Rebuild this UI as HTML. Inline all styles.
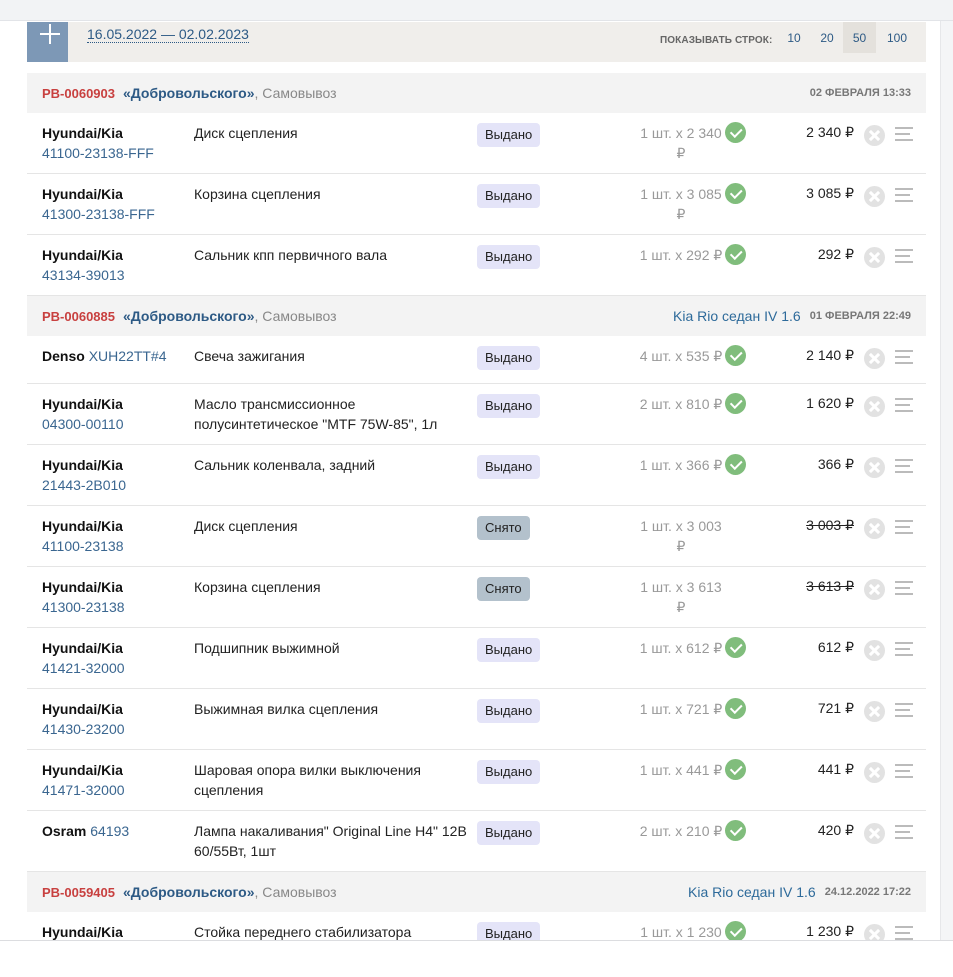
<!DOCTYPE html>
<html><head><meta charset="utf-8"><style>
*{margin:0;padding:0;box-sizing:border-box}
body{width:953px;height:977px;overflow:hidden;background:#fff;font-family:"Liberation Sans",Arial,sans-serif;font-size:14px;color:#222;position:relative}
.topbar{position:absolute;left:0;top:0;width:953px;height:21px;background:#f2f3f5;border-bottom:1px solid #e2e4e8}
.rside{position:absolute;left:940px;top:21px;width:13px;height:920px;background:#f4f5f7;border-left:1px solid #e6e7ea}
.bottom{position:absolute;left:0;top:940px;width:953px;height:37px;background:#fff;border-top:1px solid #dcdde0;z-index:5}
.filter{position:absolute;left:27px;top:22px;width:899px;height:40px;background:#f0eeeb}
.plus{position:absolute;left:0;top:0;width:41px;height:40px;background:#7d98b6}
.plus:before{content:"";position:absolute;left:13px;top:11px;width:20px;height:2px;background:#fff}
.plus:after{content:"";position:absolute;left:22px;top:2px;width:2px;height:20px;background:#fff}
.date{position:absolute;left:60px;top:4px;color:#2d5a85;font-size:14px;border-bottom:1px dotted #2d5a85;line-height:16px}
.show{position:absolute;left:633px;top:13px;font-size:10px;color:#666;font-weight:bold;letter-spacing:.1px}
.pg{position:absolute;top:0;height:31px;line-height:33px;font-size:12px;color:#2d5a85;text-align:center}
.hdr{position:absolute;left:27px;width:899px;height:40px;background:#f3f3f3}
.hdr .num{position:absolute;left:15px;top:13px;color:#c8403f;font-weight:bold;font-size:13px}
.hdr .st{position:absolute;left:96px;top:12px;color:#888;font-size:14px}
.hdr .st b{color:#2d5a85}
.hdr .dt{position:absolute;right:15px;top:14px;font-size:11px;font-weight:bold;color:#777}
.hdr .car{position:absolute;top:12px;color:#2d6a9a;font-size:14px}
.row{position:absolute;left:27px;width:899px;border-bottom:1px solid #e5e5e5}
.br{position:absolute;left:15px;top:10px;line-height:20px;width:150px}
.br b{color:#111}
.br span{color:#3a6690}
.ds{position:absolute;left:167px;top:10px;width:285px;line-height:20px;color:#222}
.bd{position:absolute;left:450px;top:10px;height:24px;line-height:24px;padding:0 8px;border-radius:4px;background:#e4e4f8;font-size:13px;color:#222}
.bd.sn{background:#b3c1cc}
.qt{position:absolute;left:609px;top:10px;width:90px;text-align:center;color:#999;line-height:20px}
.ok{position:absolute;left:698px;top:9px;width:21px;height:21px;border-radius:50%;background:#80bd7c}
.ok:after{content:"";position:absolute;left:5px;top:4px;width:9px;height:5px;border-left:2.5px solid #fff;border-bottom:2.5px solid #fff;transform:rotate(-45deg) translate(-1px,2px)}
.pr{position:absolute;right:72px;top:9px;line-height:20px;color:#222;white-space:nowrap}
.pr.s{text-decoration:line-through}
.x{position:absolute;left:837px;top:12px;width:21px;height:21px;border-radius:50%;background:#e2e2e2}
.x:before,.x:after{content:"";position:absolute;left:4px;top:9px;width:13px;height:3px;background:#fff;transform:rotate(45deg)}
.x:after{transform:rotate(-45deg)}
.m{position:absolute;left:868px;top:14px;width:18px;height:14px}
.m i{position:absolute;left:0;height:2px;background:#bbb;width:18px}
</style></head><body>
<div class="topbar"></div>
<div class="rside"></div>
<div class="filter"><div class="plus"></div><div class="date">16.05.2022 — 02.02.2023</div>
<div class="show">ПОКАЗЫВАТЬ СТРОК:</div>
<div class="pg" style="left:755px;width:24px">10</div>
<div class="pg" style="left:787px;width:26px">20</div>
<div class="pg" style="left:816px;width:33px;background:#e4e1dc;height:31px">50</div>
<div class="pg" style="left:854px;width:32px">100</div>
</div>

<div class="hdr" style="top:73px"><div class="num">РВ-0060903</div><div class="st"><b>«Добровольского»</b>, Самовывоз</div><div class="dt">02 ФЕВРАЛЯ 13:33</div></div>

<div class="row" style="top:113px;height:61px"><div class="br"><b>Hyundai/Kia</b><br><span>41100-23138-FFF</span></div><div class="ds">Диск сцепления</div><div class="bd">Выдано</div><div class="qt">1 шт. x 2 340<br>₽</div><div class="ok"></div><div class="pr">2 340 ₽</div><div class="x"></div><div class="m"><i style="top:0"></i><i style="top:6px;width:15px"></i><i style="top:12px"></i></div></div>
<div class="row" style="top:174px;height:61px"><div class="br"><b>Hyundai/Kia</b><br><span>41300-23138-FFF</span></div><div class="ds">Корзина сцепления</div><div class="bd">Выдано</div><div class="qt">1 шт. x 3 085<br>₽</div><div class="ok"></div><div class="pr">3 085 ₽</div><div class="x"></div><div class="m"><i style="top:0"></i><i style="top:6px;width:15px"></i><i style="top:12px"></i></div></div>
<div class="row" style="top:235px;height:61px"><div class="br"><b>Hyundai/Kia</b><br><span>43134-39013</span></div><div class="ds">Сальник кпп первичного вала</div><div class="bd">Выдано</div><div class="qt">1 шт. x 292 ₽</div><div class="ok"></div><div class="pr">292 ₽</div><div class="x"></div><div class="m"><i style="top:0"></i><i style="top:6px;width:15px"></i><i style="top:12px"></i></div></div>

<div class="hdr" style="top:296px"><div class="num">РВ-0060885</div><div class="st"><b>«Добровольского»</b>, Самовывоз</div><div class="car" style="left:646px">Kia Rio седан IV 1.6</div><div class="dt">01 ФЕВРАЛЯ 22:49</div></div>

<div class="row" style="top:336px;height:48px"><div class="br"><b>Denso</b> <span>XUH22TT#4</span></div><div class="ds">Свеча зажигания</div><div class="bd">Выдано</div><div class="qt">4 шт. x 535 ₽</div><div class="ok"></div><div class="pr">2 140 ₽</div><div class="x"></div><div class="m"><i style="top:0"></i><i style="top:6px;width:15px"></i><i style="top:12px"></i></div></div>
<div class="row" style="top:384px;height:61px"><div class="br"><b>Hyundai/Kia</b><br><span>04300-00110</span></div><div class="ds">Масло трансмиссионное полусинтетическое "MTF 75W-85", 1л</div><div class="bd">Выдано</div><div class="qt">2 шт. x 810 ₽</div><div class="ok"></div><div class="pr">1 620 ₽</div><div class="x"></div><div class="m"><i style="top:0"></i><i style="top:6px;width:15px"></i><i style="top:12px"></i></div></div>
<div class="row" style="top:445px;height:61px"><div class="br"><b>Hyundai/Kia</b><br><span>21443-2B010</span></div><div class="ds">Сальник коленвала, задний</div><div class="bd">Выдано</div><div class="qt">1 шт. x 366 ₽</div><div class="ok"></div><div class="pr">366 ₽</div><div class="x"></div><div class="m"><i style="top:0"></i><i style="top:6px;width:15px"></i><i style="top:12px"></i></div></div>
<div class="row" style="top:506px;height:61px"><div class="br"><b>Hyundai/Kia</b><br><span>41100-23138</span></div><div class="ds">Диск сцепления</div><div class="bd sn">Снято</div><div class="qt">1 шт. x 3 003<br>₽</div><div class="pr s">3 003 ₽</div><div class="x"></div><div class="m"><i style="top:0"></i><i style="top:6px;width:15px"></i><i style="top:12px"></i></div></div>
<div class="row" style="top:567px;height:61px"><div class="br"><b>Hyundai/Kia</b><br><span>41300-23138</span></div><div class="ds">Корзина сцепления</div><div class="bd sn">Снято</div><div class="qt">1 шт. x 3 613<br>₽</div><div class="pr s">3 613 ₽</div><div class="x"></div><div class="m"><i style="top:0"></i><i style="top:6px;width:15px"></i><i style="top:12px"></i></div></div>
<div class="row" style="top:628px;height:61px"><div class="br"><b>Hyundai/Kia</b><br><span>41421-32000</span></div><div class="ds">Подшипник выжимной</div><div class="bd">Выдано</div><div class="qt">1 шт. x 612 ₽</div><div class="ok"></div><div class="pr">612 ₽</div><div class="x"></div><div class="m"><i style="top:0"></i><i style="top:6px;width:15px"></i><i style="top:12px"></i></div></div>
<div class="row" style="top:689px;height:61px"><div class="br"><b>Hyundai/Kia</b><br><span>41430-23200</span></div><div class="ds">Выжимная вилка сцепления</div><div class="bd">Выдано</div><div class="qt">1 шт. x 721 ₽</div><div class="ok"></div><div class="pr">721 ₽</div><div class="x"></div><div class="m"><i style="top:0"></i><i style="top:6px;width:15px"></i><i style="top:12px"></i></div></div>
<div class="row" style="top:750px;height:61px"><div class="br"><b>Hyundai/Kia</b><br><span>41471-32000</span></div><div class="ds">Шаровая опора вилки выключения сцепления</div><div class="bd">Выдано</div><div class="qt">1 шт. x 441 ₽</div><div class="ok"></div><div class="pr">441 ₽</div><div class="x"></div><div class="m"><i style="top:0"></i><i style="top:6px;width:15px"></i><i style="top:12px"></i></div></div>
<div class="row" style="top:811px;height:61px"><div class="br"><b>Osram</b> <span>64193</span></div><div class="ds">Лампа накаливания" Original Line H4" 12В 60/55Вт, 1шт</div><div class="bd">Выдано</div><div class="qt">2 шт. x 210 ₽</div><div class="ok"></div><div class="pr">420 ₽</div><div class="x"></div><div class="m"><i style="top:0"></i><i style="top:6px;width:15px"></i><i style="top:12px"></i></div></div>

<div class="hdr" style="top:872px"><div class="num">РВ-0059405</div><div class="st"><b>«Добровольского»</b>, Самовывоз</div><div class="car" style="left:661px">Kia Rio седан IV 1.6</div><div class="dt">24.12.2022 17:22</div></div>
<div class="row" style="top:912px;height:61px"><div class="br"><b>Hyundai/Kia</b><br><span></span></div><div class="ds">Стойка переднего стабилизатора</div><div class="bd">Выдано</div><div class="qt">1 шт. x 1 230</div><div class="ok"></div><div class="pr">1 230 ₽</div><div class="x"></div><div class="m"><i style="top:0"></i><i style="top:6px;width:15px"></i><i style="top:12px"></i></div></div>

<div class="bottom"></div>
</body></html>
